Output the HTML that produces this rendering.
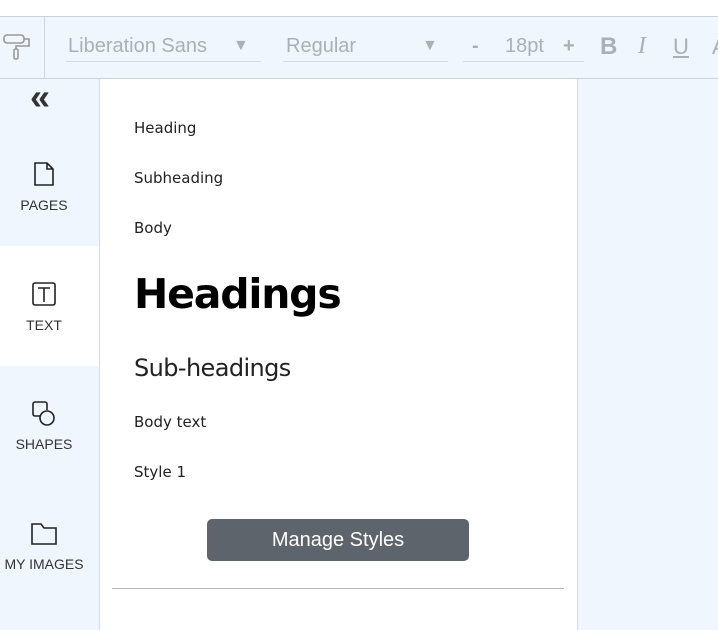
<!DOCTYPE html>
<html><head><style>
*{margin:0;padding:0;box-sizing:border-box}
body{width:718px;height:630px;background:#fff;font-family:"Liberation Sans",sans-serif;position:relative;overflow:hidden}
.tb{position:absolute;top:16px;left:0;width:718px;height:63px;background:#eff6fe;border-top:1px solid #c9d1db;border-bottom:1px solid #c9d1db}
.tb .t{position:absolute;color:#a9b0b8;font-size:20px;top:18px}
.ul{position:absolute;top:44px;height:1px;background:#d5dbe2}
.side{position:absolute;top:79px;left:0;width:100px;height:551px;background:#eff6fe;border-right:1px solid #d5dbe2}
.item{position:absolute;left:0;width:99px;height:120px;text-align:center;font-size:14px;color:#333}
.item svg{position:absolute;left:44px;transform:translateX(-50%)}
.item span{position:absolute;left:0;width:88px;text-align:center}
.panel{position:absolute;top:79px;left:100px;width:478px;height:551px;background:#fff;border-right:1px solid #d5dbe2}
.right{position:absolute;top:79px;left:578px;width:140px;height:551px;background:#eff6fe}
.p{position:absolute;left:34px;color:#222;font-family:"DejaVu Sans","Liberation Sans",sans-serif}
</style></head><body>
<div class="tb">
 <svg style="position:absolute;left:2px;top:17px" width="30" height="28" viewBox="0 0 30 28" fill="none" stroke="#999" stroke-width="1.6"><rect x="2" y="1" width="20" height="8" rx="3"/><path d="M22 5h5v7H14v3"/><rect x="12" y="15" width="4" height="10" rx="1.5"/></svg>
 <div style="position:absolute;left:44px;top:0;width:1px;height:61px;background:#cfd6de"></div>
 <div class="t" style="left:68px">Liberation Sans</div>
 <div class="t" style="left:233px;font-size:16px;top:20px">▼</div>
 <div class="ul" style="left:66px;width:195px"></div>
 <div class="t" style="left:286px">Regular</div>
 <div class="t" style="left:422px;font-size:16px;top:20px">▼</div>
 <div class="ul" style="left:283px;width:165px"></div>
 <div class="t" style="left:472px;font-weight:bold">-</div>
 <div class="t" style="left:505px">18pt</div>
 <div class="t" style="left:563px;font-weight:bold">+</div>
 <div class="ul" style="left:463px;width:121px"></div>
 <div class="t" style="left:600px;font-weight:bold;font-size:24px;top:16px">B</div>
 <div class="t" style="left:638px;font-style:italic;font-family:'Liberation Serif',serif;font-size:24px;top:16px">I</div>
 <div class="t" style="left:673px;text-decoration:underline;font-size:22px;top:17px">U</div>
 <div class="t" style="left:712px;font-size:22px;top:17px">A</div>
</div>
<div class="side">
 <div style="position:absolute;left:30px;top:0px;font-size:36px;color:#333;line-height:36px;font-weight:bold">«</div>
 <div class="item" style="top:47px;background:#eff6fe"><svg style="top:35px" width="22" height="26" viewBox="0 0 22 26" fill="none" stroke="#222" stroke-width="1.6"><path d="M2 2h12l6 6v16H2z"/><path d="M14 2v6h6"/></svg><span style="top:71px">PAGES</span></div>
 <div class="item" style="top:167px;background:#fff"><svg style="top:36px" width="24" height="24" viewBox="0 0 24 24" fill="none" stroke="#222" stroke-width="1.6"><rect x="1" y="1" width="22" height="22" rx="2"/><path d="M6 6h12M12 6v14"/></svg><span style="top:71px">TEXT</span></div>
 <div class="item" style="top:287px"><svg style="top:34px" width="26" height="28" viewBox="0 0 26 28" fill="none" stroke="#222" stroke-width="1.6"><path d="M10 16H4a2 2 0 0 1-2-2V4a2 2 0 0 1 2-2h10a2 2 0 0 1 2 2v6"/><circle cx="16" cy="18" r="7"/></svg><span style="top:70px">SHAPES</span></div>
 <div class="item" style="top:407px"><svg style="top:36px" width="28" height="24" viewBox="0 0 28 24" fill="none" stroke="#222" stroke-width="1.6"><path d="M2 2h9l3 4h12v16H2z"/></svg><span style="top:70px">MY IMAGES</span></div>
</div>
<div class="panel">
 <div class="p" style="top:40px;font-size:15px">Heading</div>
 <div class="p" style="top:90px;font-size:15px">Subheading</div>
 <div class="p" style="top:140px;font-size:15px">Body</div>
 <div class="p" style="top:191px;font-size:41px;font-weight:bold;color:#000;letter-spacing:-1.2px">Headings</div>
 <div class="p" style="top:275px;font-size:24px;letter-spacing:-0.6px">Sub-headings</div>
 <div class="p" style="top:334px;font-size:15px">Body text</div>
 <div class="p" style="top:384px;font-size:15px">Style 1</div>
 <div style="position:absolute;left:107px;top:440px;width:262px;height:42px;background:#5e646b;border-radius:5px;color:#fff;font-size:20px;text-align:center;line-height:42px">Manage Styles</div>
 <div style="position:absolute;left:12px;top:509px;width:452px;height:1px;background:#b8b8b8"></div>
</div>
<div class="right"></div>
</body></html>
